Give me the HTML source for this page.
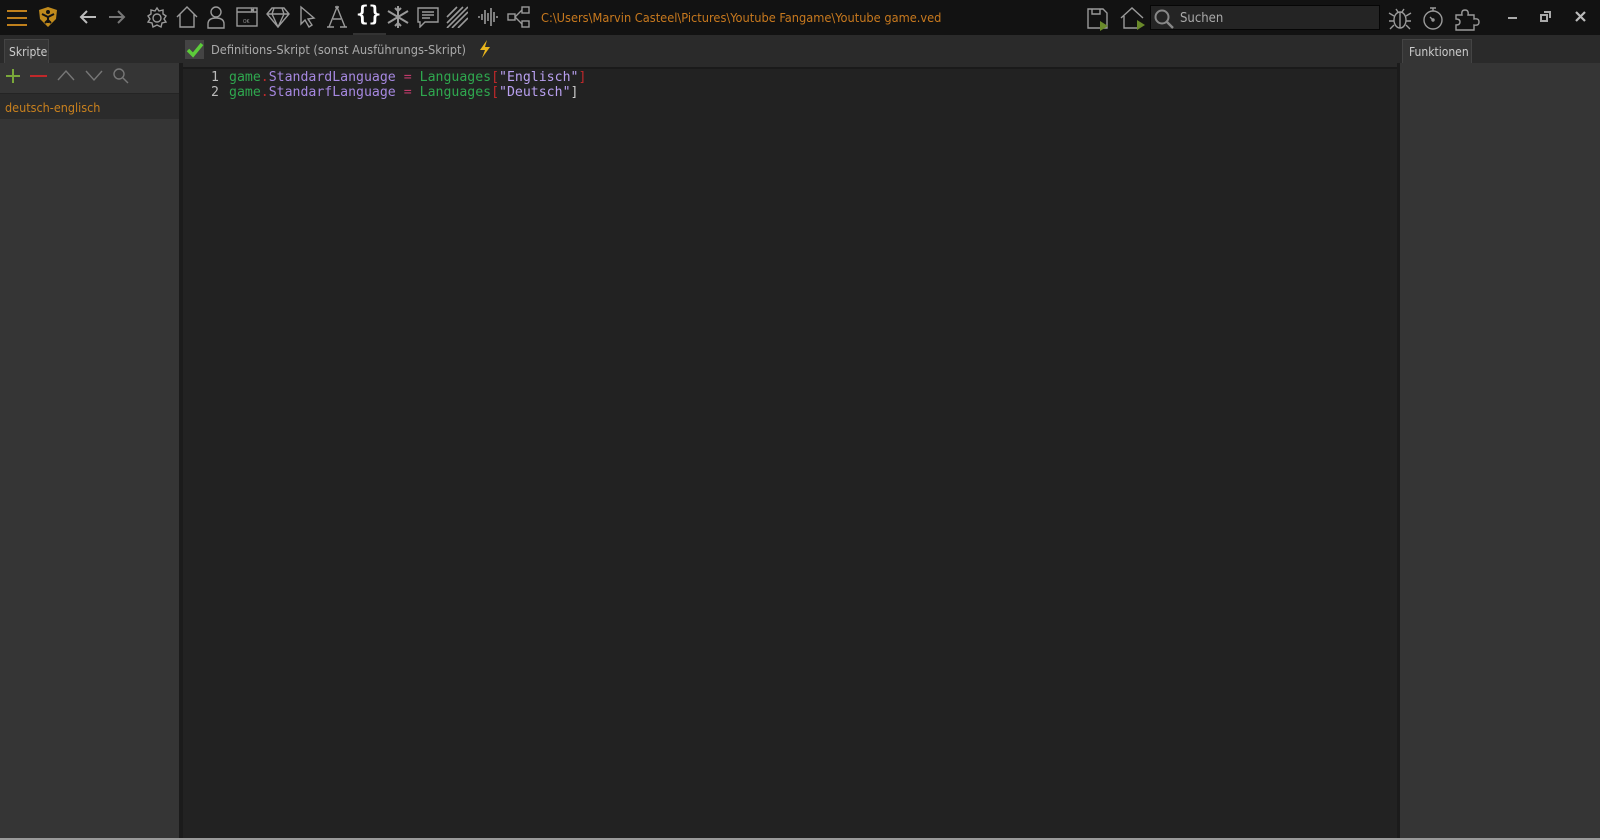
<!DOCTYPE html><html><head><meta charset="utf-8"><style>
*{margin:0;padding:0;box-sizing:border-box}
body{width:1600px;height:840px;background:#2a2a2a;position:relative;overflow:hidden;font-family:"DejaVu Sans Condensed","Liberation Sans",sans-serif;}
.a{position:absolute}
#top{left:0;top:0;width:1600px;height:35px;background:#121212}
svg{position:absolute;stroke:#9a9a9a;fill:none;stroke-width:1.4}
.mono{font-family:"DejaVu Sans Mono","Liberation Mono",monospace;font-size:13.2px;line-height:15px;white-space:pre}
</style></head><body>
<div id="top" class="a"></div>
<svg style="left:6px;top:8px" width="22" height="20"><path d="M1 3H21M1 10H21M1 17H21" stroke="#c0801c" stroke-width="2"/></svg>
<svg style="left:37px;top:6px" width="22" height="22"><path d="M2 4L11 1L20 4L19 13L11 21L3 13Z" fill="#c08a1c" stroke="none"/><circle cx="11" cy="6" r="2" fill="#121212" stroke="none"/><path d="M5 8L11 11L17 8M11 11V17M8 17L11 14L14 17" stroke="#121212" stroke-width="2"/></svg>
<svg style="left:78px;top:9px" width="20" height="16"><path d="M18 8H3M9 2L3 8L9 14" stroke="#bbb" stroke-width="2"/></svg>
<svg style="left:107px;top:9px" width="20" height="16"><path d="M2 8H17M11 2L17 8L11 14" stroke="#777" stroke-width="2"/></svg>
<svg style="left:145px;top:6px" width="24" height="24"><circle cx="12" cy="12" r="4"/><path d="M12 2L14 5L18 4L18 8L21 10L19 13L21 16L17 17L16 21L12 19L8 21L7 17L3 16L5 13L3 10L6 8L6 4L10 5Z"/></svg>
<svg style="left:175px;top:5px" width="24" height="24"><path d="M2 12L12 2L22 12M5 9V22H19V9"/></svg>
<svg style="left:206px;top:5px" width="20" height="24"><circle cx="10" cy="7" r="5"/><path d="M2 23V19Q2 13 10 13Q18 13 18 19V23Z"/></svg>
<svg style="left:236px;top:6px" width="22" height="22"><rect x="1" y="2" width="20" height="18"/><path d="M1 6H21M15 3L18 5M18 3L15 5"/><text x="7" y="17" font-size="5" fill="#999" stroke="none">OK</text></svg>
<svg style="left:266px;top:6px" width="24" height="22"><path d="M6 2H18L23 8L12 21L1 8Z M1 8H23M8 2L6 8L12 21L18 8L16 2"/></svg>
<svg style="left:298px;top:5px" width="20" height="24"><path d="M3 2L3 19L7 15L11 22L14 20L10 14L16 13Z"/></svg>
<svg style="left:326px;top:5px" width="22" height="24"><path d="M1 22H8M14 22H21M3 22L11 2L19 22M7 14H15M9 2L13 2"/></svg>
<div class="a" style="left:356px;top:2px;color:#fff;font:bold 21px 'DejaVu Sans Mono',monospace">{}</div>
<div class="a" style="left:353px;top:33px;width:33px;height:2px;background:#333"></div>
<svg style="left:386px;top:5px" width="24" height="24"><path d="M12 1V23M2 6L22 18M2 18L22 6M9 3L12 6L15 3M9 21L12 18L15 21" stroke-width="2"/></svg>
<svg style="left:416px;top:6px" width="24" height="22"><path d="M2 2H22V16H9L4 21V16H2Z M6 6H18M6 9H18M6 12H14"/></svg>
<svg style="left:446px;top:6px" width="22" height="22"><path d="M1 11L11 1M1 17L17 1M1 22L22 1M6 22L22 6M12 22L22 12" stroke-width="1.6"/></svg>
<svg style="left:476px;top:6px" width="24" height="22"><path d="M2 11H4M6 8V14M9 4V18M12 7V15M15 2V20M18 6V16M21 10V12" stroke-width="1.6"/></svg>
<svg style="left:507px;top:6px" width="24" height="22"><rect x="1" y="8" width="7" height="6"/><rect x="15" y="1" width="7" height="6"/><rect x="15" y="15" width="7" height="6"/><path d="M8 11L15 4M8 11L15 18"/></svg>
<div class="a" style="left:541px;top:10px;color:#c8791e;font-size:12.7px">C:\Users\Marvin Casteel\Pictures\Youtube Fangame\Youtube game.ved</div>
<svg style="left:1086px;top:7px" width="24" height="24"><path d="M2 2H17L21 6V21H2Z M6 2V7H14V2"/><path d="M14 14L22 19L14 24Z" fill="#6a8a2a" stroke="none"/></svg>
<svg style="left:1120px;top:6px" width="26" height="24"><path d="M1 12L12 2L23 12M4 10V22H18"/><path d="M17 14L25 19L17 24Z" fill="#6a8a2a" stroke="none"/></svg>
<div class="a" style="left:1150px;top:5px;width:230px;height:25px;background:#242424;border:1px solid #060606"></div>
<svg style="left:1153px;top:8px" width="22" height="22" ><circle cx="9" cy="9" r="6.5" stroke="#888" stroke-width="2"/><path d="M14 14L20 20" stroke="#888" stroke-width="2.4"/></svg>
<div class="a" style="left:1180px;top:11px;color:#aaa;font-size:13px">Suchen</div>
<svg style="left:1387px;top:5px" width="26" height="26"><ellipse cx="13" cy="15" rx="6" ry="8"/><path d="M13 7V23M9 4L11 7M17 4L15 7M7 11L2 8M19 11L24 8M7 16H2M19 16H24M7 20L3 24M19 20L23 24"/></svg>
<svg style="left:1421px;top:5px" width="24" height="26"><circle cx="12" cy="15" r="9"/><path d="M9 3H15M12 3V6M12 15L9 12" /><circle cx="12" cy="15" r="1"/></svg>
<svg style="left:1454px;top:5px" width="26" height="26"><path d="M2 10H8Q7 5 11 5Q15 5 14 10H20V14Q25 13 25 17Q25 21 20 20V25H2V20Q6 20 6 17Q6 14 2 14Z"/></svg>
<div class="a" style="left:1508px;top:17px;width:9px;height:2px;background:#aaa"></div>
<svg style="left:1540px;top:11px" width="12" height="12"><rect x="1" y="4" width="6" height="6" stroke="#aaa" stroke-width="2"/><path d="M4 1H10V7" stroke="#aaa" stroke-width="2"/></svg>
<svg style="left:1575px;top:11px" width="12" height="12"><path d="M1 1L10 10M10 1L1 10" stroke="#bbb" stroke-width="2.2"/></svg>

<div class="a" style="left:4px;top:39px;width:45px;height:25px;background:#353535;border:1px solid #444;border-bottom:none;color:#ccc;font-size:12px;padding:5px 0 0 4px">Skripte</div>
<div class="a" style="left:1402px;top:39px;width:70px;height:24px;background:#353535;border:1px solid #444;border-bottom:none;color:#ccc;font-size:12px;padding:5px 0 0 6px">Funktionen</div>
<div class="a" style="left:185px;top:40px;width:19px;height:19px;background:#444"></div>
<svg style="left:186px;top:41px" width="18" height="18"><path d="M2 9L7 14L16 3" stroke="#5ccc3a" stroke-width="3.5"/></svg>
<div class="a" style="left:211px;top:42px;color:#aaa;font-size:12.7px">Definitions-Skript (sonst Ausführungs-Skript)</div>
<svg style="left:478px;top:40px" width="14" height="18"><path d="M9 0L2 10H7L4 18L12 7H7Z" fill="#e8b51c" stroke="none"/></svg>

<div class="a" style="left:0;top:63px;width:179px;height:777px;background:#353535"></div>
<div class="a" style="left:179px;top:63px;width:4px;height:777px;background:#1b1b1b"></div>
<svg style="left:4px;top:68px" width="18" height="16"><path d="M9 1V15M2 8H16" stroke="#7aa83a" stroke-width="2"/></svg>
<div class="a" style="left:30px;top:75px;width:17px;height:2px;background:#c0282a"></div>
<svg style="left:56px;top:68px" width="20" height="14"><path d="M2 12L10 3L18 12" stroke="#777"/></svg>
<svg style="left:84px;top:68px" width="20" height="14"><path d="M2 3L10 12L18 3" stroke="#777"/></svg>
<svg style="left:112px;top:67px" width="18" height="18"><circle cx="7" cy="7" r="5" stroke="#777"/><path d="M11 11L16 16" stroke="#777"/></svg>
<div class="a" style="left:0;top:93px;width:179px;height:26px;background:#2b2b2b;border-top:1px solid #242424"></div>
<div class="a" style="left:5px;top:100px;color:#c8801e;font-size:12.5px">deutsch-englisch</div>

<div class="a" style="left:183px;top:67px;width:1214px;height:773px;background:#222;border-top:2px solid #1a1a1a"></div>
<div class="a" style="left:1397px;top:63px;width:3px;height:777px;background:#1b1b1b"></div>
<div class="a mono" style="left:211px;top:70px;color:#bbb">1
2</div>
<div class="a mono" style="left:229px;top:70px"><span style="color:#2fa84f">game</span><span style="color:#c0282a">.</span><span style="color:#a688e0">StandardLanguage</span> <span style="color:#c03a6a">=</span> <span style="color:#2fa84f">Languages</span><span style="color:#c0282a">[</span><span style="color:#b9a0f0">"Englisch"</span><span style="color:#c0282a">]</span>
<span style="color:#2fa84f">game</span><span style="color:#c0282a">.</span><span style="color:#a688e0">StandarfLanguage</span> <span style="color:#c03a6a">=</span> <span style="color:#2fa84f">Languages</span><span style="color:#c0282a">[</span><span style="color:#b9a0f0">"Deutsch"</span><span style="color:#ccc">]</span></div>

<div class="a" style="left:1400px;top:63px;width:200px;height:777px;background:#353535"></div>
<div class="a" style="left:0;top:838px;width:1600px;height:2px;background:#9a9a9a"></div>
</body></html>
